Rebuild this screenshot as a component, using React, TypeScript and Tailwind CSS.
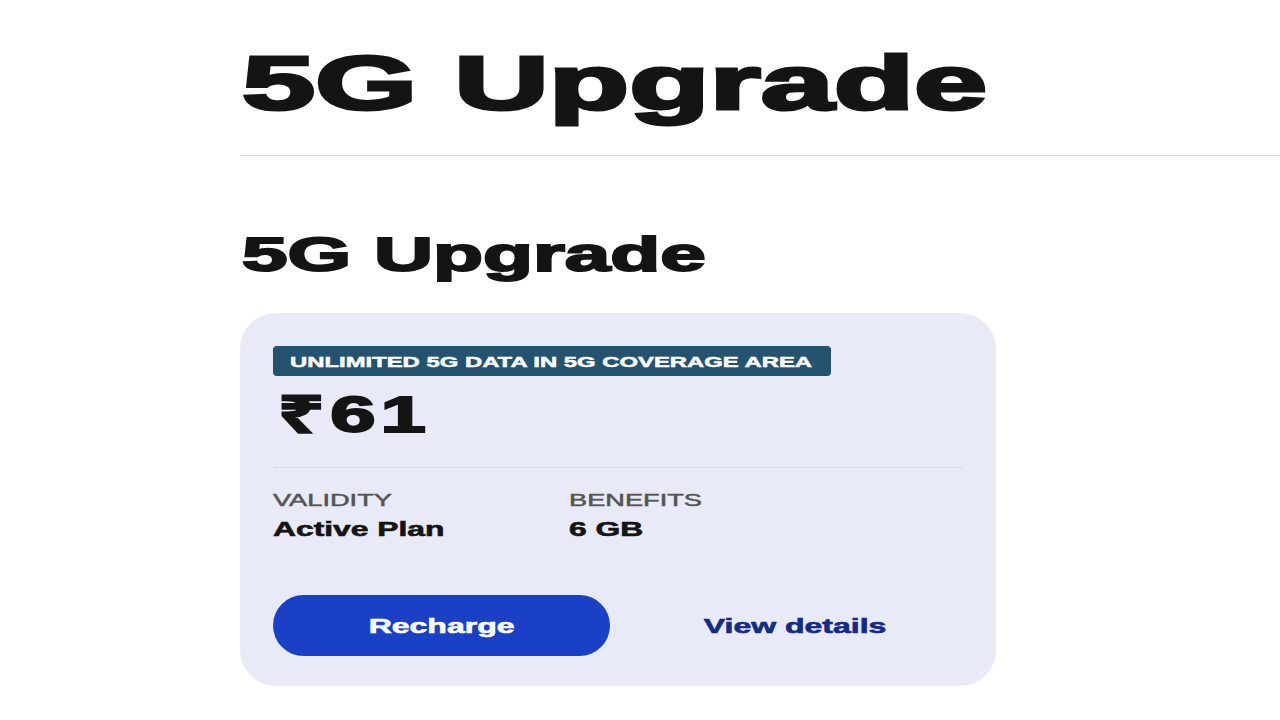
import React from 'react';

// Text in the reference is drawn in a very wide, heavy face; Liberation Sans stretched on x
// with a thin stroke gets close.
const font = { fontFamily: '"Liberation Sans", Arial, sans-serif' };

export default function App() {
  return (
    <div className="min-h-[720px] w-full overflow-hidden bg-white text-[#141414]" style={font}>
      <div className="pl-[240px] pt-[45px]">
        {/* Page title */}
        <h1 className="text-[76px] font-bold leading-none">
          <span className="inline-block origin-left translate-x-[2px] scale-x-[1.73] [-webkit-text-stroke:3px_currentColor]">
            5G Upgrade
          </span>
        </h1>

        <div className="mt-[34px] h-px w-full bg-[#e2e2e2]"></div>

        {/* Section title */}
        <h2 className="mt-[74px] text-[49px] font-bold leading-none">
          <span className="inline-block origin-left translate-x-[2px] scale-x-[1.67] [-webkit-text-stroke:2px_currentColor]">
            5G Upgrade
          </span>
        </h2>

        {/* Plan card */}
        <div className="mt-[34px] w-[756px] rounded-[36px] bg-[#e8eaf7] px-[33px] pt-[33px] pb-[30px]">
          <div className="flex h-[30px] w-[558px] items-center rounded-[4px] bg-[#23536f] pl-[17px]">
            <span className="inline-block origin-left scale-x-[1.59] text-[15px] font-bold uppercase leading-none text-white [-webkit-text-stroke:0.5px_currentColor]">
              Unlimited 5G Data in 5G Coverage Area
            </span>
          </div>

          <div className="mt-[14px] text-[50px] font-bold leading-none">
            <span className="inline-block origin-left translate-x-[5px] scale-x-[1.63] tracking-[3px] [-webkit-text-stroke:2px_currentColor]">
              ₹61
            </span>
          </div>

          <div className="mt-[27px] h-px w-full bg-[#d9dbe8]"></div>

          <div className="mt-[21px] grid grid-cols-[296px_1fr]">
            <div>
              <div className="text-[17px] uppercase leading-[24px] text-[#555555]">
                <span className="inline-block origin-left scale-x-[1.6] [-webkit-text-stroke:0.5px_currentColor]">
                  Validity
                </span>
              </div>
              <div className="mt-[3px] text-[20px] font-bold leading-[26px]">
                <span className="inline-block origin-left scale-x-[1.59] [-webkit-text-stroke:0.6px_currentColor]">
                  Active Plan
                </span>
              </div>
            </div>
            <div>
              <div className="text-[17px] uppercase leading-[24px] text-[#555555]">
                <span className="inline-block origin-left scale-x-[1.6] [-webkit-text-stroke:0.5px_currentColor]">
                  Benefits
                </span>
              </div>
              <div className="mt-[3px] text-[20px] font-bold leading-[26px]">
                <span className="inline-block origin-left scale-x-[1.59] [-webkit-text-stroke:0.6px_currentColor]">
                  6 GB
                </span>
              </div>
            </div>
          </div>

          {/* Actions */}
          <div className="mt-[53px] grid grid-cols-2 gap-[17px]">
            <button className="flex h-[61px] items-center justify-center rounded-full bg-[#1a41c5] text-[20px] font-bold text-white">
              <span className="inline-block scale-x-[1.6] [-webkit-text-stroke:0.6px_currentColor]">Recharge</span>
            </button>
            <button className="flex h-[61px] items-center justify-center text-[20px] font-bold text-[#112b86]">
              <span className="inline-block scale-x-[1.6] [-webkit-text-stroke:0.6px_currentColor]">View details</span>
            </button>
          </div>
        </div>
      </div>
    </div>
  );
}
